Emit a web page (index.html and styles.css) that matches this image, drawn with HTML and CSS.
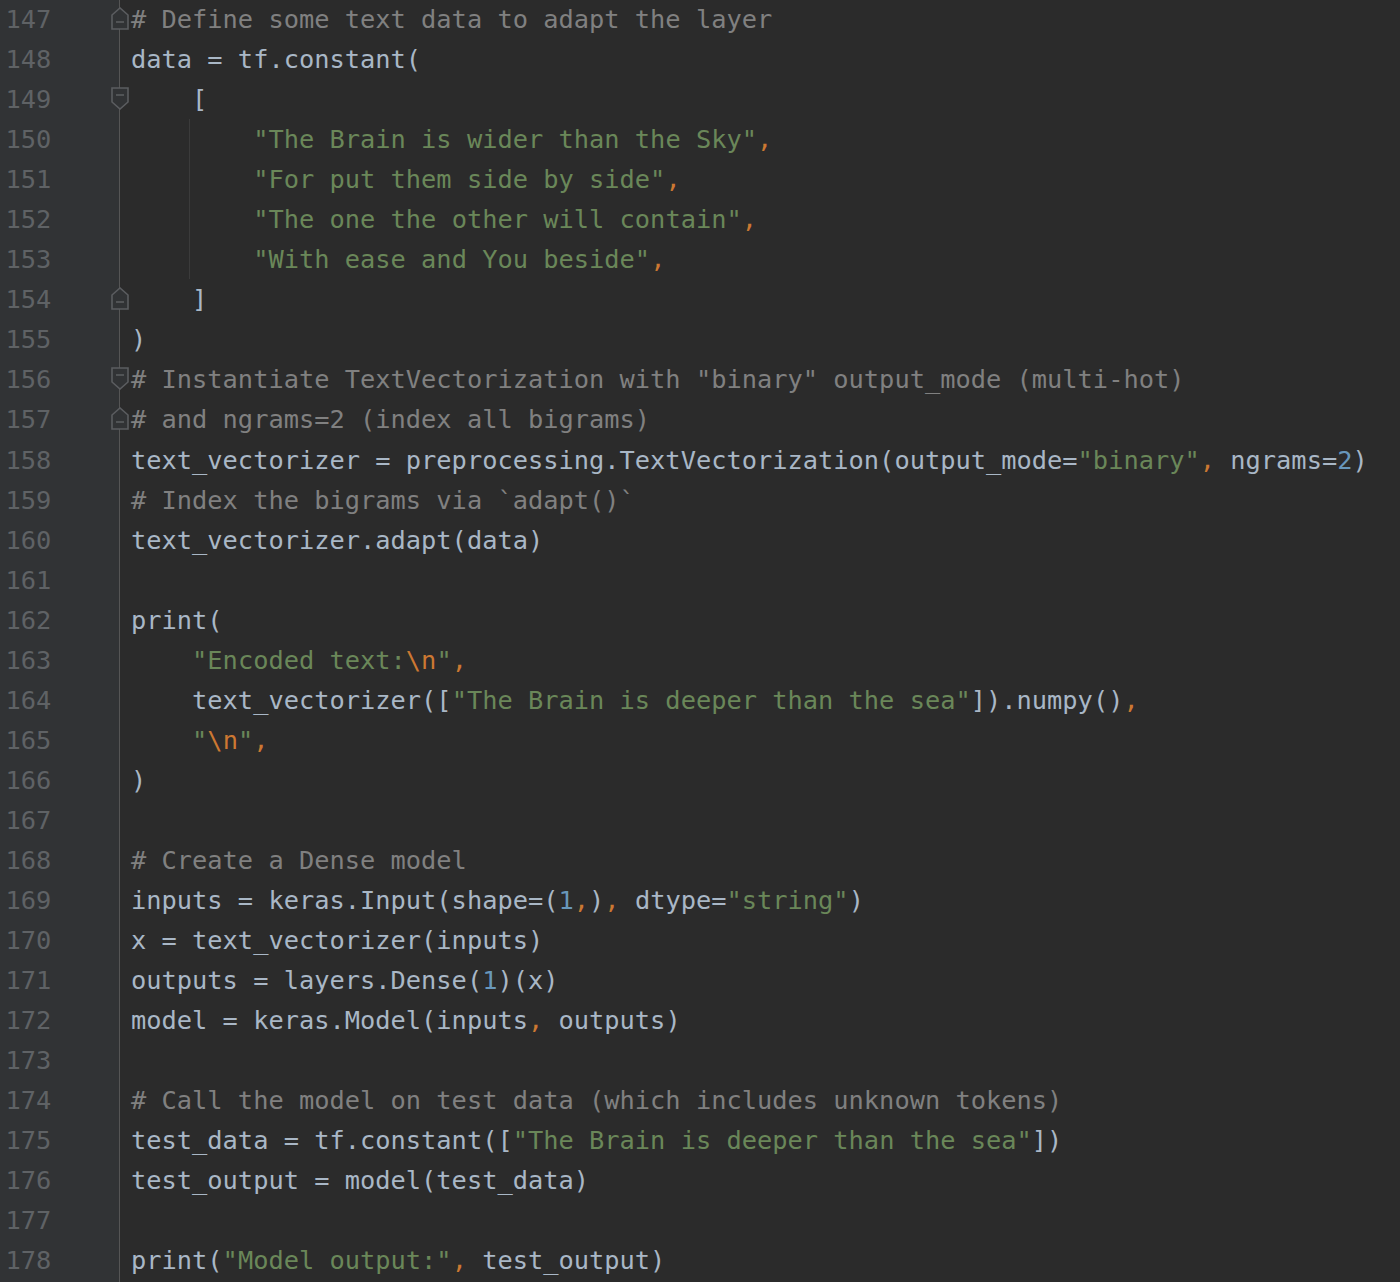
FILE: index.html
```html
<!DOCTYPE html>
<html>
<head>
<meta charset="utf-8">
<link rel="stylesheet" href="styles.css">
</head>
<body>
<div class="editor">
  <div class="gutter">
    <div class="ln">147<svg class="fold" viewBox="0 0 18 23"><polygon points="1,8 9,1 17,8 17,22 1,22"/><line x1="5" y1="15" x2="13" y2="15"/></svg></div>
    <div class="ln">148</div>
    <div class="ln">149<svg class="fold down" viewBox="0 0 18 23"><polygon points="1,1 17,1 17,15 9,22 1,15"/><line x1="5" y1="8" x2="13" y2="8"/></svg></div>
    <div class="ln">150</div>
    <div class="ln">151</div>
    <div class="ln">152</div>
    <div class="ln">153</div>
    <div class="ln">154<svg class="fold" viewBox="0 0 18 23"><polygon points="1,8 9,1 17,8 17,22 1,22"/><line x1="5" y1="15" x2="13" y2="15"/></svg></div>
    <div class="ln">155</div>
    <div class="ln">156<svg class="fold down" viewBox="0 0 18 23"><polygon points="1,1 17,1 17,15 9,22 1,15"/><line x1="5" y1="8" x2="13" y2="8"/></svg></div>
    <div class="ln">157<svg class="fold" viewBox="0 0 18 23"><polygon points="1,8 9,1 17,8 17,22 1,22"/><line x1="5" y1="15" x2="13" y2="15"/></svg></div>
    <div class="ln">158</div>
    <div class="ln">159</div>
    <div class="ln">160</div>
    <div class="ln">161</div>
    <div class="ln">162</div>
    <div class="ln">163</div>
    <div class="ln">164</div>
    <div class="ln">165</div>
    <div class="ln">166</div>
    <div class="ln">167</div>
    <div class="ln">168</div>
    <div class="ln">169</div>
    <div class="ln">170</div>
    <div class="ln">171</div>
    <div class="ln">172</div>
    <div class="ln">173</div>
    <div class="ln">174</div>
    <div class="ln">175</div>
    <div class="ln">176</div>
    <div class="ln">177</div>
    <div class="ln">178</div>
  </div>
  <div class="code">
    <div class="line"><span class="c"># Define some text data to adapt the layer</span></div>
    <div class="line">data = tf.constant(</div>
    <div class="line">    [</div>
    <div class="block">
      <div class="line">        <span class="s">"The Brain is wider than the Sky"</span><span class="k">,</span></div>
      <div class="line">        <span class="s">"For put them side by side"</span><span class="k">,</span></div>
      <div class="line">        <span class="s">"The one the other will contain"</span><span class="k">,</span></div>
      <div class="line">        <span class="s">"With ease and You beside"</span><span class="k">,</span></div>
    </div>
    <div class="line">    ]</div>
    <div class="line">)</div>
    <div class="line"><span class="c"># Instantiate TextVectorization with "binary" output_mode (multi-hot)</span></div>
    <div class="line"><span class="c"># and ngrams=2 (index all bigrams)</span></div>
    <div class="line">text_vectorizer = preprocessing.TextVectorization(output_mode=<span class="s">"binary"</span><span class="k">,</span> ngrams=<span class="n">2</span>)</div>
    <div class="line"><span class="c"># Index the bigrams via `adapt()`</span></div>
    <div class="line">text_vectorizer.adapt(data)</div>
    <div class="line"></div>
    <div class="line">print(</div>
    <div class="line">    <span class="s">"Encoded text:</span><span class="k">\n</span><span class="s">"</span><span class="k">,</span></div>
    <div class="line">    text_vectorizer([<span class="s">"The Brain is deeper than the sea"</span>]).numpy()<span class="k">,</span></div>
    <div class="line">    <span class="s">"</span><span class="k">\n</span><span class="s">"</span><span class="k">,</span></div>
    <div class="line">)</div>
    <div class="line"></div>
    <div class="line"><span class="c"># Create a Dense model</span></div>
    <div class="line">inputs = keras.Input(shape=(<span class="n">1</span><span class="k">,</span>)<span class="k">,</span> dtype=<span class="s">"string"</span>)</div>
    <div class="line">x = text_vectorizer(inputs)</div>
    <div class="line">outputs = layers.Dense(<span class="n">1</span>)(x)</div>
    <div class="line">model = keras.Model(inputs<span class="k">,</span> outputs)</div>
    <div class="line"></div>
    <div class="line"><span class="c"># Call the model on test data (which includes unknown tokens)</span></div>
    <div class="line">test_data = tf.constant([<span class="s">"The Brain is deeper than the sea"</span>])</div>
    <div class="line">test_output = model(test_data)</div>
    <div class="line"></div>
    <div class="line">print(<span class="s">"Model output:"</span><span class="k">,</span> test_output)</div>
  </div>
</div>
</body>
</html>
```
FILE: styles.css
```css
html, body {
  margin: 0;
  padding: 0;
  background: #2b2b2b;
  overflow: hidden;
}

.editor {
  display: flex;
  margin-top: -1px;
  height: 1290px;
  font-family: "DejaVu Sans Mono", "Liberation Mono", monospace;
  font-size: 25.36px;
  line-height: 40.06px;
}

.gutter {
  width: 119px;
  flex: none;
  background: #313335;
  border-right: 1px solid #555555;
  color: #5f6265;
}

.ln {
  position: relative;
  height: 40.06px;
  padding-left: 5.5px;
  white-space: pre;
}

.fold {
  position: absolute;
  right: -9.5px;
  top: 8px;
  width: 18px;
  height: 23px;
}

.fold polygon {
  fill: #313335;
  stroke: #5b5d60;
  stroke-width: 1.6;
}

.fold line {
  stroke: #5b5d60;
  stroke-width: 1.6;
}

.code {
  flex: 1;
  padding-left: 11px;
  color: #a9b7c6;
}

.line {
  height: 40.06px;
  white-space: pre;
}

.block {
  position: relative;
}

.block::before {
  content: "";
  position: absolute;
  left: 58px;
  top: 0;
  bottom: 0;
  width: 1px;
  background: #3b3b3b;
}

.c { color: #808080; }
.s { color: #6a8759; }
.k { color: #cc7832; }
.n { color: #6897bb; }
```
